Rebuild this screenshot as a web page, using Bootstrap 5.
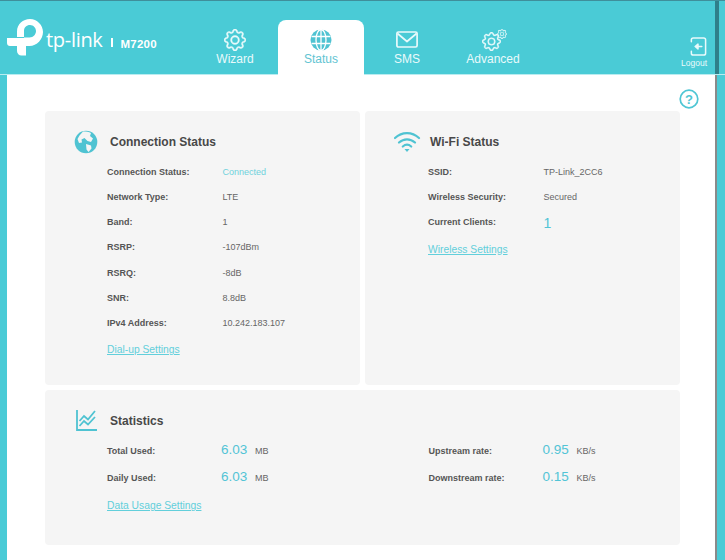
<!DOCTYPE html>
<html lang="en">
<head>
    <meta charset="UTF-8">
    <title>M7200 Status</title>
    <link href="https://cdn.jsdelivr.net/npm/bootstrap@5.3.2/dist/css/bootstrap.min.css" rel="stylesheet">
    <style>
        html, body { height: 100%; overflow: hidden; }
        body { font-family: "Liberation Sans", Arial, sans-serif; background: #4acbd6; color: #555; }
        .top-line { height: 1px; background: #3f8f9b; }
        .top-bar { height: 74px; background: #4acbd6; border-bottom: 1px solid #b9ecf0; }
        .brand { width: 192px; padding: 17px 0 0 7px; color: #fff; }
        .brand-name { font-family: "Open Sans", sans-serif; font-size: 20px; line-height: 1; margin: 12px 0 0 1px; letter-spacing: -.3px; }
        .brand-sep { width: 2px; height: 9px; background: #fff; margin: 20px 8px 0 8px; }
        .brand-model { font-size: 11.5px; font-weight: 700; margin-top: 18px; letter-spacing: .2px; }
        .tab { width: 86px; height: 55px; margin-top: 19px; padding-top: 9px; color: #e9fafb; font-size: 12px; border-radius: 8px 8px 0 0; line-height: 1; }
        .tab svg { display: block; margin-bottom: 2px; height: 22px; }
        .tab.active { background: #fff; color: #62c4d2; }
        .gear-line { stroke: currentColor; stroke-width: .3; }
        .logout { margin: 36px 8px 0 auto; color: #e9fafb; font-size: 8.5px; line-height: 1; }
        .logout svg { margin-left: 8px; margin-bottom: 3px; }
        .edge-dark { width: 4px; background: #2f7f8a; }
        .edge { width: 6px; background: #4acbd6; }
        .shell { height: 485px; }
        .page { width: 708px; margin-left: 7px; background: #fff; }
        .edge-gray { width: 2px; background: #8a8a8a; }
        .help-row { height: 36px; padding: 14px 16px 0 0; }
        .panels { margin: 0 35px 0 38px; gap: 5px; }
        .panel-pair { gap: 5px; }
        .panel { background: #f5f5f5; border: 0; border-radius: 4px; }
        .panel-top { height: 274px; width: 315px; }
        .panel-stats { height: 155px; }
        .panel-head { height: 49px; padding: 19px 0 0 29px; }
        .panel-stats .panel-head { height: 48px; }
        .panel-icon { width: 36px; height: 24px; }
        .panel-title { font-size: 12px; font-weight: 700; color: #484848; line-height: 24px; }
        .rows { padding-left: 62px; }
        .wifi .rows { padding-left: 63px; }
        .stats .rows + .rows { padding-left: 66px; }
        .kv { height: 25.2px; font-size: 9px; color: #666; }
        .kv .lbl { width: 115.500px; font-weight: 700; color: #555; }
        .kv .ok { color: #6fd2dc; }
        .kv .num { color: #52c4d6; font-size: 14px; line-height: 1; }
        .stats .kv { height: 27px; }
        .stats .lbl { width: 114px; }
        .stats .num { font-size: 13.5px; width: 34px; position: relative; top: -2px; }
        .set-link { font-size: 10.3px; color: #62cfdb; text-decoration: underline; line-height: 24px; }
    </style>
</head>
<body>

<svg width="0" height="0" class="position-absolute">
    <symbol id="gear" viewBox="0 0 16 16">
        <g class="gear-line">
        <path fill="currentColor" d="M8 4.754a3.246 3.246 0 1 0 0 6.492 3.246 3.246 0 0 0 0-6.492zM5.754 8a2.246 2.246 0 1 1 4.492 0 2.246 2.246 0 0 1-4.492 0z"/>
        <path fill="currentColor" d="M9.796 1.343c-.527-1.79-3.065-1.79-3.592 0l-.094.319a.873.873 0 0 1-1.255.52l-.292-.16c-1.64-.892-3.433.902-2.54 2.541l.159.292a.873.873 0 0 1-.52 1.255l-.319.094c-1.79.527-1.79 3.065 0 3.592l.319.094a.873.873 0 0 1 .52 1.255l-.16.292c-.892 1.64.901 3.434 2.541 2.54l.292-.159a.873.873 0 0 1 1.255.52l.094.319c.527 1.79 3.065 1.79 3.592 0l.094-.319a.873.873 0 0 1 1.255-.52l.292.16c1.64.893 3.434-.902 2.54-2.541l-.159-.292a.873.873 0 0 1 .52-1.255l.319-.094c1.79-.527 1.79-3.065 0-3.592l-.319-.094a.873.873 0 0 1-.52-1.255l.16-.292c.893-1.64-.902-3.433-2.541-2.54l-.292.159a.873.873 0 0 1-1.255-.52l-.094-.319zm-2.633.283c.246-.835 1.428-.835 1.674 0l.094.319a1.873 1.873 0 0 0 2.693 1.115l.291-.16c.764-.415 1.6.42 1.184 1.185l-.159.292a1.873 1.873 0 0 0 1.116 2.692l.318.094c.835.246.835 1.428 0 1.674l-.319.094a1.873 1.873 0 0 0-1.115 2.693l.16.291c.415.764-.42 1.6-1.185 1.184l-.291-.159a1.873 1.873 0 0 0-2.693 1.116l-.094.318c-.246.835-1.428.835-1.674 0l-.094-.319a1.873 1.873 0 0 0-2.692-1.115l-.292.16c-.764.415-1.6-.42-1.184-1.185l.159-.291A1.873 1.873 0 0 0 1.945 8.930l-.319-.094c-.835-.246-.835-1.428 0-1.674l.319-.094A1.873 1.873 0 0 0 3.060 4.377l-.16-.292c-.415-.764.42-1.6 1.185-1.184l.292.159a1.873 1.873 0 0 0 2.692-1.115l.094-.319z"/>
        </g>
    </symbol>
</svg>

<div class="top-line"></div>
<header class="top-bar d-flex">
    <div class="brand d-flex">
        <svg width="38" height="38" viewBox="0 0 38 38" class="flex-shrink-0">
            <path fill="#fff" d="M10 19V13.500C10 6 16 1 23 1s13 6 13 13-6 14-13.500 14H19v9.500h-4.500c-2.500 0-4.500-2-4.500-4.500v-5H3c-1.700 0-3-1.300-3-3v-5h17v-7h0v6.500h5.500c4 0 6.500-3.500 6.500-6.500s-2.500-6-6-6-6 2.500-6 6V19z"/>
        </svg>
        <div class="brand-name">tp-link</div>
        <div class="brand-sep"></div>
        <div class="brand-model">M7200</div>
    </div>

    <div class="tab d-flex flex-column align-items-center">
        <svg width="22" height="22"><use href="#gear"/></svg>
        Wizard
    </div>
    <div class="tab active d-flex flex-column align-items-center">
        <svg width="22" height="22" viewBox="0 0 22 22">
            <circle cx="11" cy="11" r="10.500" fill="#4fc3d2"/>
            <g fill="none" stroke="#fff" stroke-width="1.300">
                <ellipse cx="11" cy="11" rx="5" ry="10.500"/>
                <path d="M11 .5v21M1.500 7.500h19M1.500 14.500h19"/>
            </g>
        </svg>
        Status
    </div>
    <div class="tab d-flex flex-column align-items-center">
        <svg width="22" height="22" viewBox="0 0 22 22" fill="none" stroke="currentColor" stroke-width="1.700" stroke-linejoin="round">
            <rect x=".9" y="3" width="20.200" height="15" rx="1.500"/>
            <path d="M1.500 4.500 11 12.500l9.500-8"/>
        </svg>
        SMS
    </div>
    <div class="tab d-flex flex-column align-items-center">
        <svg width="27" height="22" viewBox="0 0 27 22" class="ms-1">
            <use href="#gear" x="0" y="3" width="19" height="19"/>
            <use href="#gear" x="15" y="0" width="10" height="10"/>
        </svg>
        Advanced
    </div>

    <div class="logout d-flex flex-column align-items-center">
        <svg width="18" height="19" viewBox="0 0 18 20" fill="none" stroke="currentColor" stroke-width="1.600" stroke-linecap="round" stroke-linejoin="round">
            <path d="M2 5V3a2 2 0 0 1 2-2h11a2 2 0 0 1 2 2v14a2 2 0 0 1-2 2H4a2 2 0 0 1-2-2v-2"/>
            <path d="M6 10h7M6 10l3-2.500v5z"/>
        </svg>
        Logout
    </div>
    <div class="edge-dark"></div>
    <div class="edge"></div>
</header>

<div class="shell d-flex">
    <main class="page">
        <div class="help-row d-flex justify-content-end">
            <svg width="20" height="20" viewBox="0 0 20 20">
                <circle cx="10" cy="10" r="8.800" fill="none" stroke="#4fc6d4" stroke-width="1.700"/>
                <text x="10" y="14.500" text-anchor="middle" font-size="13" font-weight="700" font-family="Liberation Sans" fill="#4fc6d4">?</text>
            </svg>
        </div>

        <div class="panels d-flex flex-column">
            <div class="panel-pair d-flex">
                <section class="card panel panel-top flex-shrink-0">
                    <div class="panel-head d-flex">
                        <svg class="panel-icon" viewBox="0 0 36 24">
                            <circle cx="12" cy="12" r="11.300" fill="#4fc3d2"/>
                            <path fill="#f5f5f5" d="M9 1.500c3 0 6 .3 8 1.500l-1 3 3 2.500-2 3.500-3.500-1-3-3-3 1.500.5 3-3 .5-1.500-4 2-3.500zM12 14l5 1.500.5 3-3 3.500-2-2.500z"/>
                        </svg>
                        <div class="panel-title">Connection Status</div>
                    </div>
                    <div class="rows">
                        <div class="kv d-flex align-items-center"><span class="lbl">Connection Status:</span><span class="ok">Connected</span></div>
                        <div class="kv d-flex align-items-center"><span class="lbl">Network Type:</span><span>LTE</span></div>
                        <div class="kv d-flex align-items-center"><span class="lbl">Band:</span><span>1</span></div>
                        <div class="kv d-flex align-items-center"><span class="lbl">RSRP:</span><span>-107dBm</span></div>
                        <div class="kv d-flex align-items-center"><span class="lbl">RSRQ:</span><span>-8dB</span></div>
                        <div class="kv d-flex align-items-center"><span class="lbl">SNR:</span><span>8.8dB</span></div>
                        <div class="kv d-flex align-items-center"><span class="lbl">IPv4 Address:</span><span>10.242.183.107</span></div>
                        <a href="#" class="set-link">Dial-up Settings</a>
                    </div>
                </section>

                <section class="card panel panel-top wifi flex-shrink-0">
                    <div class="panel-head d-flex">
                        <svg class="panel-icon" viewBox="0 0 36 24" fill="none" stroke="#4fc3d2" stroke-width="2.200" stroke-linecap="round">
                            <path d="M1 8c7-6.500 17-6.500 24 0M5 12.500c4.800-4.300 11.200-4.300 16 0M8.800 16.500c2.700-2.300 5.700-2.300 8.400 0"/>
                            <path fill="#4fc3d2" stroke="none" d="M10.500 19h5L13 22z"/>
                        </svg>
                        <div class="panel-title">Wi-Fi Status</div>
                    </div>
                    <div class="rows">
                        <div class="kv d-flex align-items-center"><span class="lbl">SSID:</span><span>TP-Link_2CC6</span></div>
                        <div class="kv d-flex align-items-center"><span class="lbl">Wireless Security:</span><span>Secured</span></div>
                        <div class="kv d-flex align-items-center"><span class="lbl">Current Clients:</span><span class="num">1</span></div>
                        <a href="#" class="set-link">Wireless Settings</a>
                    </div>
                </section>
            </div>

            <section class="card panel panel-stats">
                <div class="panel-head d-flex">
                    <svg class="panel-icon" viewBox="0 0 36 24" fill="none" stroke="#4fc3d2" stroke-width="1.800">
                        <path d="M3 1v20h20"/>
                        <path d="M5.500 12 10 7l4 3.500L21 2M5.500 17 10 12l4 3.500L21 8"/>
                    </svg>
                    <div class="panel-title">Statistics</div>
                </div>
                <div class="row g-0 stats">
                    <div class="col-6 rows">
                        <div class="kv d-flex align-items-center"><span class="lbl">Total Used:</span><span class="num">6.03</span><span class="unit">MB</span></div>
                        <div class="kv d-flex align-items-center"><span class="lbl">Daily Used:</span><span class="num">6.03</span><span class="unit">MB</span></div>
                        <a href="#" class="set-link">Data Usage Settings</a>
                    </div>
                    <div class="col-6 rows">
                        <div class="kv d-flex align-items-center"><span class="lbl">Upstream rate:</span><span class="num">0.95</span><span class="unit">KB/s</span></div>
                        <div class="kv d-flex align-items-center"><span class="lbl">Downstream rate:</span><span class="num">0.15</span><span class="unit">KB/s</span></div>
                    </div>
                </div>
            </section>
        </div>
    </main>
    <div class="edge-gray"></div>
    <div class="edge flex-grow-1"></div>
</div>

<script src="https://cdn.jsdelivr.net/npm/bootstrap@5.3.2/dist/js/bootstrap.bundle.min.js"></script>
</body>
</html>
